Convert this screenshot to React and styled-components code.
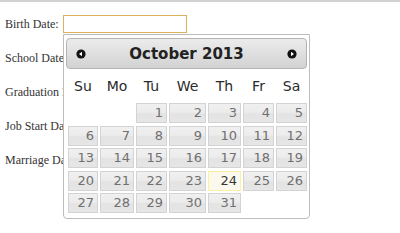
import React from "react";
import styled, { createGlobalStyle } from "styled-components";

const GlobalStyle = createGlobalStyle`
  html, body {
    margin: 0;
    padding: 0;
    background: #fff;
  }
`;

const Page = styled.div`
  position: relative;
  width: 400px;
  height: 233px;
  overflow: hidden;
  border-top: 2px solid #d2d2d2;
  box-sizing: border-box;
`;

const Form = styled.div`
  padding: 5px 0 0 5px;
  display: flex;
  flex-direction: column;
`;

const Row = styled.div`
  height: 34px;
  display: flex;
  align-items: center;
  gap: 4px;
  font-family: "Liberation Serif", "Times New Roman", serif;
  font-size: 12px;
  color: #333;
`;

const Input = styled.input`
  box-sizing: border-box;
  width: 124px;
  height: 18px;
  margin: 0;
  padding: 1px 3px;
  border: 1px solid ${(p) => (p.$focused ? "#dcb061" : "#b8b8b8")};
  outline: none;
  background: #fff;
`;

const Picker = styled.div`
  position: absolute;
  left: 63px;
  top: 32px;
  width: 247px;
  height: 185px;
  box-sizing: border-box;
  padding: 3px 2px 2px 2px;
  background: #fff;
  border: 1px solid #bdbdbd;
  border-radius: 0 0 4px 4px;
  font-family: "DejaVu Sans", Verdana, sans-serif;
`;

const Header = styled.div`
  height: 31px;
  box-sizing: border-box;
  display: flex;
  align-items: center;
  justify-content: space-between;
  padding: 0 9px;
  border: 1px solid #b4b4b4;
  border-radius: 4px;
  background: linear-gradient(#ececec, #d2d2d2);
`;

const Title = styled.div`
  font-size: 15px;
  font-weight: bold;
  color: #222;
`;

const NavButton = styled.span`
  display: flex;
  width: 10px;
  height: 10px;
`;

const DayNames = styled.div`
  height: 34px;
  display: grid;
  grid-template-columns: 30px 34px 31px 37px 33px 31px 31px;
  column-gap: 2px;
  align-items: center;
  padding-left: 2px;
`;

const DayName = styled.div`
  text-align: center;
  font-size: 14px;
  color: #2a2a2a;
`;

const Days = styled.div`
  display: grid;
  grid-template-columns: 30px 34px 31px 37px 33px 31px 31px;
  grid-auto-rows: 20px;
  column-gap: 2px;
  row-gap: 2.5px;
  padding-left: 2px;
`;

const Day = styled.div`
  box-sizing: border-box;
  border: 1px solid ${(p) => (p.$today ? "#fcefa1" : "#d3d3d3")};
  background: ${(p) =>
    p.$today
      ? "#fbf9ee"
      : "linear-gradient(#f0f0f0 0%, #ececec 45%, #e3e3e3 55%, #e6e6e6 100%)"};
  color: ${(p) => (p.$today ? "#363636" : "#707070")};
  font-size: 13px;
  line-height: 18px;
  text-align: right;
  padding-right: 3px;
`;

const Empty = styled.div``;

const Arrow = ({ dir }) => (
  <svg width="10" height="10" viewBox="0 0 10 10">
    <circle cx="5" cy="5" r="4.6" fill="#111" />
    {dir === "left" ? (
      <path d="M3 5 L6 2.8 L6 7.2 Z" fill="#fff" />
    ) : (
      <path d="M7 5 L4 2.8 L4 7.2 Z" fill="#fff" />
    )}
  </svg>
);

const labels = ["Birth Date:", "School Date:", "Graduation Date:", "Job Start Date:", "Marriage Date:"];
const dayNames = ["Su", "Mo", "Tu", "We", "Th", "Fr", "Sa"];

export default function App() {
  const cells = [];
  for (let i = 0; i < 2; i++) cells.push(<Empty key={"e" + i} />);
  for (let d = 1; d <= 31; d++) {
    cells.push(
      <Day key={d} $today={d === 24}>
        {d}
      </Day>
    );
  }

  return (
    <>
      <GlobalStyle />
      <Page>
        <Form>
          {labels.map((l, i) => (
            <Row key={l}>
              <span>{l}</span>
              <Input $focused={i === 0} />
            </Row>
          ))}
        </Form>
        <Picker>
          <Header>
            <NavButton>
              <Arrow dir="left" />
            </NavButton>
            <Title>October 2013</Title>
            <NavButton>
              <Arrow dir="right" />
            </NavButton>
          </Header>
          <DayNames>
            {dayNames.map((n) => (
              <DayName key={n}>{n}</DayName>
            ))}
          </DayNames>
          <Days>{cells}</Days>
        </Picker>
      </Page>
    </>
  );
}
